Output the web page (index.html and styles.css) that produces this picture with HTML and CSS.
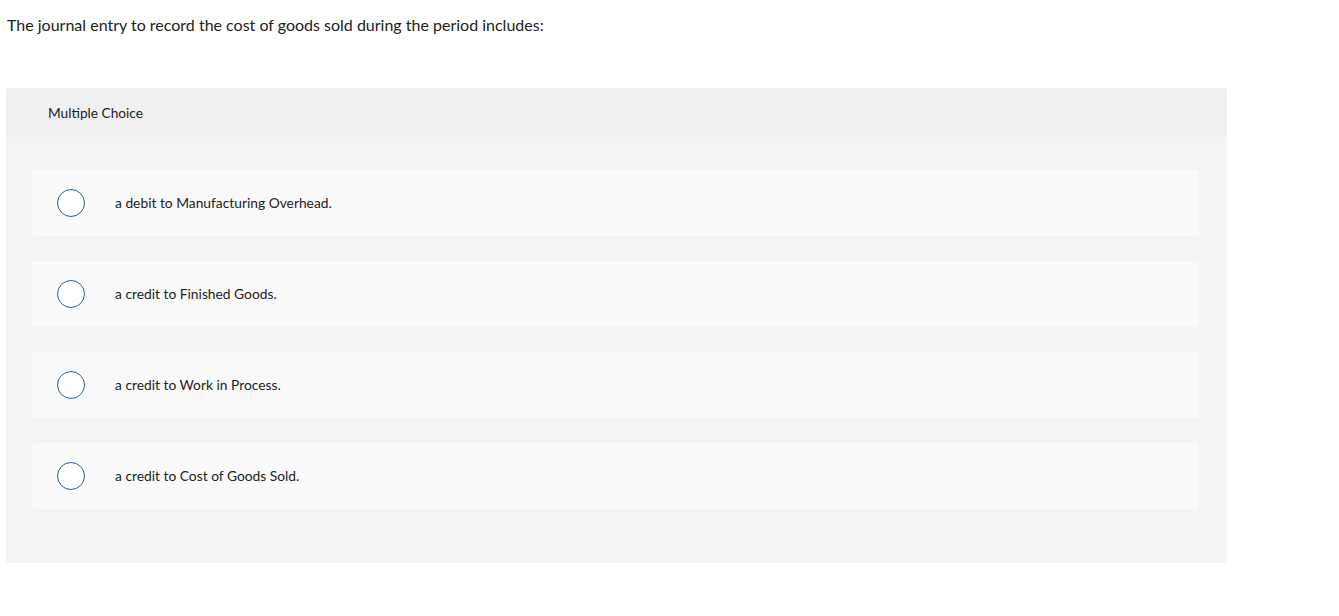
FILE: index.html
```html
<!DOCTYPE html>
<html>
<head>
<meta charset="utf-8">
<link rel="stylesheet" href="styles.css">
</head>
<body>
<p class="question">The journal entry to record the cost of goods sold during the period includes:</p>
<div class="panel">
  <div class="panel-head">Multiple Choice</div>
  <div class="panel-body">
    <div class="option"><span class="radio"></span><span class="label">a debit to Manufacturing Overhead.</span></div>
    <div class="option"><span class="radio"></span><span class="label">a credit to Finished Goods.</span></div>
    <div class="option"><span class="radio"></span><span class="label">a credit to Work in Process.</span></div>
    <div class="option"><span class="radio"></span><span class="label">a credit to Cost of Goods Sold.</span></div>
  </div>
</div>
</body>
</html>
```
FILE: styles.css
```css
body {
  margin: 0;
  padding: 0 6px;
  background: #fff;
  font-family: Lato, "Liberation Sans", sans-serif;
  color: #1a1a1a;
}
.question {
  margin: 0;
  padding: 15px 0 0 1px;
  font-size: 16px;
  line-height: 20px;
  height: 73px;
  color: #222;
}
.panel {
  width: 1221px;
  border-radius: 3px;
  overflow: hidden;
  background: #f4f4f4;
}
.panel-head {
  background: #f0f0f0;
  height: 49px;
  display: flex;
  align-items: center;
  padding-left: 42px;
  font-size: 13.7px;
  color: #222;
}
.panel-body {
  padding: 33px 28px 54px 26px;
  display: flex;
  flex-direction: column;
  gap: 25px;
}
.option {
  background: #fafafa;
  height: 66px;
  display: flex;
  align-items: center;
  padding-left: 25px;
  border-radius: 2px;
}
.radio {
  box-sizing: border-box;
  width: 28px;
  height: 28px;
  border: 1.5px solid #2d5f8f;
  border-radius: 50%;
  background: #fff;
  flex: none;
}
.label {
  margin-left: 30px;
  padding-bottom: 2px;
  font-size: 13.8px;
  color: #222;
}
```
